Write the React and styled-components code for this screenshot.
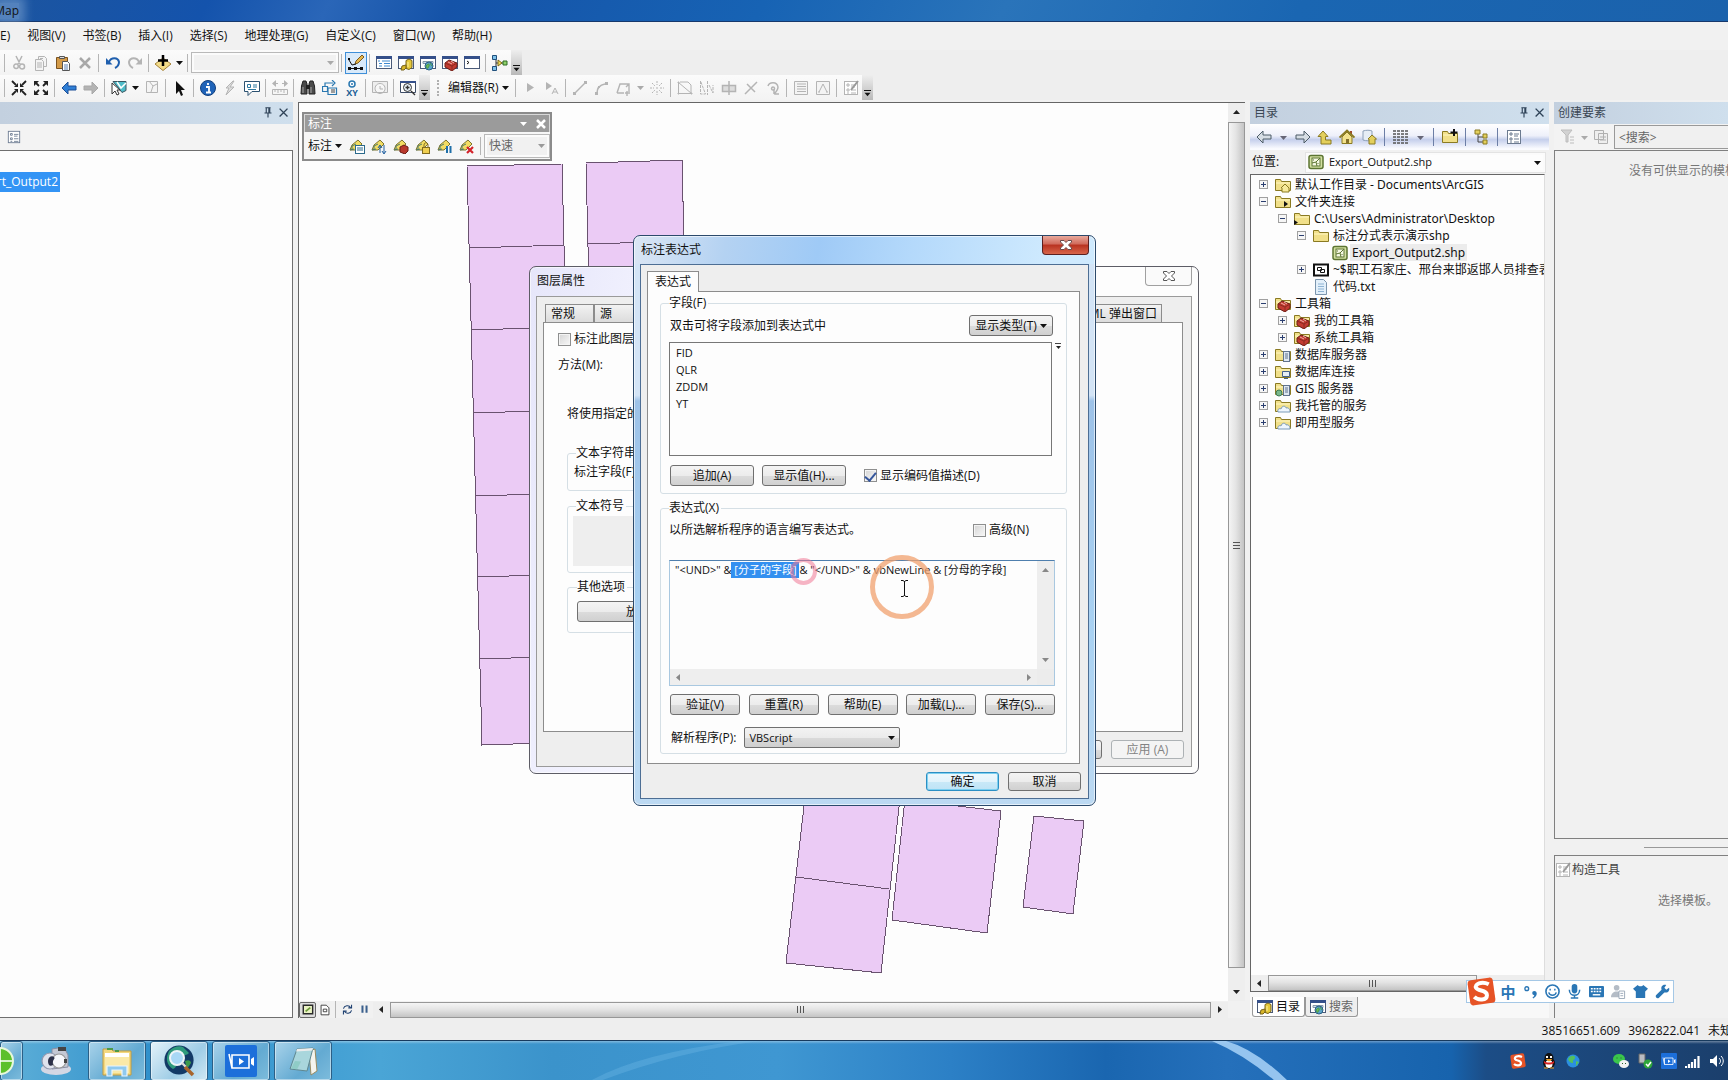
import React, { useEffect, useRef } from 'react'
import styled, { createGlobalStyle, css } from 'styled-components'

const GlobalStyle = createGlobalStyle`
  * { box-sizing: border-box; }
  body {
    margin: 0;
    overflow: hidden;
    background: #eee;
  }
  body, button, input, select, textarea {
    font-family: "Open Sans", "Noto Sans CJK SC", sans-serif;
    font-size: 12px;
    line-height: 16px;
    color: #111;
  }
  button { padding: 0; }
  ul { margin: 0; padding: 0; list-style: none; }
`

/* ---------- icons ---------- */

const gray = '#b4b4b4'
const yellow = '#e3cf5c'
const olive = '#8a7a22'

const Win = ({ children }) => (
  <>
    <rect x="0.5" y="1.5" width="15" height="12" fill="#fff" stroke="#4a5a78" />
    <rect x="0" y="1" width="16" height="3" fill="#35508a" />
    {children}
  </>
)

const Folder = ({ children }) => (
  <>
    <path d="M.5 13.5v-11h5l1 2h9v9z" fill="#f1e08a" stroke={olive} />
    <path d="M1 6h14" stroke="#fff7c4" />
    {children}
  </>
)

const Tag = ({ children }) => (
  <>
    <path d="M1 12L3 7l6-5 4 4-6 6z" fill="#f2dc62" stroke="#7c7430" />
    <path d="M1 12l4-1M3 12V8l4-2" stroke="#4d7a6a" fill="none" />
    {children}
  </>
)

const Chest = () => (
  <>
    <path d="M3 8l4-3 8 3v4l-5 4-7-4z" fill="#c23a30" stroke="#6b1d16" />
    <path d="M3 8l7 3 5-3M10 11v5" stroke="#8c2a20" fill="none" />
    <path d="M6 7l4 2M9 6l3 2" stroke="#f0b0a8" fill="none" />
  </>
)

const Cylinder = () => (
  <>
    <path d="M8 5.5l3-1.5 3 1.5v7l-3 2-3-1z" fill="#e6c93a" stroke="#76621a" />
    <path d="M4 11l4-1v3l-2 2H3z" fill="#d8b628" stroke="#76621a" />
    <path d="M10 7v5" stroke="#fbf0a0" />
  </>
)

const Globe = ({ x = 9, y = 11 }) => (
  <>
    <circle cx={x} cy={y} r="4" fill="#5aa3c8" stroke="#2c5f85" />
    <path d={`M${x - 3} ${y}c2-3 4-2 3 0s-1 3-2 2zM${x + 1} ${y - 3}l2 3`} fill="#6dbb5d" stroke="#4d9a48" />
  </>
)

const House = () => (
  <>
    <path d="M11 2h2v4l-2-2z" fill="#a04a2c" />
    <path d="M3 8v6.5h10V8L8 3z" fill="#f3e28d" stroke={olive} />
    <path d="M.5 8.5L8 1.5l7.5 7" stroke={olive} strokeWidth="1.8" fill="none" />
    <path d="M7 10h3v4H7z" fill="#84702c" />
  </>
)

const Server = () => (
  <>
    <rect x="8.5" y="4.5" width="6" height="10" fill="#dfe8f2" stroke="#61738c" />
    <path d="M10 7h3M10 9h3M10 11h3" stroke="#61738c" />
  </>
)

const Cloud = () => <path d="M3 14c-1-3 2-4 3-3 1-4 5-3 5-1 3-1 4 2 4 4z" fill="#eef6fd" stroke="#7b9bb8" />

const Props = ({ color = '#6b7a90' }) => (
  <>
    <rect x="1.5" y="1.5" width="13" height="13" fill="#fff" stroke={color} />
    <path d="M4 4h2v2H4zM4 9h2v2H4zM8 5h5M8 10h5M4 13h2M8 13h5M8 7h4" stroke={color} fill="none" />
  </>
)

const Shp = () => (
  <>
    <rect x="1" y="1.5" width="14" height="13" rx="2" fill="#d3e0a2" stroke="#5c7432" strokeWidth="1.5" />
    <rect x="4" y="4" width="8" height="8" fill="#f6f9e4" stroke="#5c7432" />
    <path d="M4 9l4-1 4-4M8 8l1 4M5 6h1M10 9v1" stroke="#5c7432" fill="none" />
  </>
)

const glyphs = {
  cut: <path d="M5 1l4 8M11 1L7 9M5 9a2 2 0 1 0 .1 4.5A2 2 0 0 0 5 9zM11 9a2 2 0 1 0 .1 5A2 2 0 0 0 11 9z" stroke={gray} strokeWidth="1.5" fill="none" />,
  copy: <path d="M5.5 5V1.5h6l2 2v8H11M2.5 4.5h6l2 2v9h-8zM4 8h5M4 10h5M4 12h5M7 3.5h3" stroke={gray} fill="#f4f4f4" />,
  paste: (
    <>
      <path d="M1.5 2.5h11v11h-11z" fill="#d39a48" stroke="#7a5220" />
      <path d="M4.5 3.5V1.5h5v2z" fill="#ddd" stroke="#555" />
      <path d="M7.5 6.5h5l2 2v7h-7z" fill="#fff" stroke="#555" />
      <path d="M9 10h4M9 12h4M9 14h4" stroke="#5a7fb0" />
    </>
  ),
  del: <path d="M3 3l10 10M13 3L3 13" stroke="#a8a8a8" strokeWidth="2.5" />,
  undo: (
    <>
      <path d="M4 7c2-5 9-5 10 0 0 3-2 5-4 6" stroke="#1f5fae" strokeWidth="2" fill="none" />
      <path d="M1 3v6.5h6.5z" fill="#1f5fae" />
    </>
  ),
  redo: (
    <>
      <path d="M12 7C10 2 3 2 2 7c0 3 2 5 4 6" stroke={gray} strokeWidth="2" fill="none" />
      <path d="M15 3v6.5H8.5z" fill={gray} />
    </>
  ),
  addData: (
    <>
      <path d="M0 9l8-6 8 6-8 6.5z" fill="#f3dc88" stroke="#a4823a" />
      <path d="M8 0v11M3 5.5h10" stroke="#000" strokeWidth="2.5" />
    </>
  ),
  edit: (
    <>
      <path d="M7 9l1-3 6-6 2 2-6 6z" fill="#e8b84a" stroke="#7a5a20" />
      <path d="M1 5l3 5 4-1M2 13.5h12" stroke="#111" fill="none" />
      <path d="M0 12h3v3H0zM6 12h3v3H6zM12 12h3v3h-3zM0 3h2v2H0z" fill="#111" />
    </>
  ),
  table: <Win><path d="M2 6h2M6 6h8M3 8.5h3M8 8.5h6M3 11h3M8 11h6" stroke="#3f8ad0" /></Win>,
  catalogWin: <Win><Cylinder /></Win>,
  searchWin: <Win><path d="M3 6.5h10v2H3z" fill="#cfe0ee" stroke="#89a" /><Globe /></Win>,
  toolboxWin: <Win><Chest /></Win>,
  pyWin: <Win><path d="M3 6l2 1.5L3 9" stroke="#111" fill="none" /></Win>,
  model: (
    <>
      <path d="M4 3v10M4 8h10" stroke="#333" />
      <path d="M.5.5h4v4h-4zM.5 11.5h4v4h-4z" fill="#7fc2ea" stroke="#20507c" />
      <path d="M6 5l4 3-4 3z" fill="#f3dd57" stroke="#7a6a1a" />
      <path d="M11 6h4v4h-4z" fill="#8fd16a" stroke="#2f6a24" />
    </>
  ),
  shrink: (
    <>
      <path d="M1 1l4 4M15 1l-4 4M1 15l4-4M15 15l-4-4" stroke="#222" strokeWidth="1.8" />
      <path d="M7 3v4H3zM9 3v4h4zM7 13V9H3zM9 13V9h4z" fill="#222" />
    </>
  ),
  grow: (
    <>
      <path d="M3 3l3 3M13 3l-3 3M3 13l3-3M13 13l-3-3" stroke="#222" strokeWidth="1.8" />
      <path d="M1 1h5L1 6zM15 1h-5l5 5zM1 15h5l-5-5zM15 15h-5l5-5z" fill="#222" />
    </>
  ),
  back: <path d="M1 8l6-6v4h8v4H7v4z" fill="#2f7fd6" stroke="#1c4f96" />,
  fwd: <path d="M15 8L9 2v4H1v4h8v4z" fill={gray} stroke="#a8a8a8" />,
  selectFeat: (
    <>
      <path d="M2 1.5h13v9l-4 2-3-4z" fill="#4fbcc8" stroke="#3a5560" />
      <path d="M6 2l4 6 5-5" stroke="#fff" strokeWidth="1.5" fill="none" />
      <path d="M1 3v11l3-3 2 4 2-1-2-4h3z" fill="#fff" stroke="#333" />
    </>
  ),
  clearSel: <path d="M2.5 1.5h11v11h-11zM5 1l4 5 4-2M9 6l-2 6" stroke={gray} fill="#f4f4f4" />,
  pointer: <path d="M4 1v13l3-3 2 5 2-1-2-5h4z" fill="#111" />,
  info: (
    <>
      <circle cx="8" cy="8" r="7.5" fill="#1f63b8" stroke="#123f7c" />
      <path d="M6 7h3v5M6 12.5h5M8 3v2" stroke="#fff" strokeWidth="1.8" fill="none" />
    </>
  ),
  bolt: <path d="M11 1L4 8h3l-3 7 8-8H8l4-6z" fill="#ddd" stroke={gray} />,
  html: (
    <>
      <path d="M.5 1.5h15v10H8l-4 4v-4H.5z" fill="#fff" stroke="#2b5170" />
      <path d="M3.5 4.5h3v3h-3zM9 5h4M9 7h4M4 9.5h8" stroke="#2b78a0" fill="none" />
    </>
  ),
  measure: (
    <>
      <path d="M0 3.5L4 0v7zM16 3.5L12 0v7z" fill={gray} />
      <path d="M3 3.5h3M10 3.5h3M.5 9.5h15v5H.5zM3 10v2M6 10v3M9 10v2M12 10v3" stroke={gray} fill="none" />
    </>
  ),
  find: (
    <>
      <path d="M3 1h3l1 3v10H1l.5-8zM13 1h-3L9 4v10h6l-.5-8z" fill="#4a4a4a" stroke="#222" />
      <path d="M6 5h4v4H6z" fill="#222" />
      <path d="M3 7v6M11 7v6" stroke="#aaa" />
    </>
  ),
  route: (
    <>
      <path d="M.5 6.5h5v5h-5zM8 8h6.5v6.5H6V8zM3 6V3h8M10 0l3 3-3 3" stroke="#2b78b0" fill="none" strokeWidth="1.2" />
      <path d="M9 10h4M9 12h4" stroke="#444" />
    </>
  ),
  clock: <path d="M.5 1.5h15v11H.5zM8 3.5a5 5 0 1 0 .1 0zM8 6v3h3" stroke={gray} fill="#eee" />,
  zoomWin: (
    <>
      <path d="M.5 1.5h15v11H.5z" fill="#fff" stroke="#3d4c66" />
      <path d="M0 1h16v2H0z" fill="#35508a" />
      <circle cx="7.5" cy="7.5" r="4" fill="#e8f2fa" stroke="#333" />
      <path d="M11 11l4 4M5.5 7.5h4M7.5 5.5v4" stroke="#333" strokeWidth="1.4" />
    </>
  ),
  eArrow: <path d="M5 3v9l7-4.5z" fill={gray} />,
  eArrowA: <><path d="M2 2v8l6-4z" fill={gray} /><path d="M8 14l3-6 3 6M9 12h4" stroke={gray} fill="none" /></>,
  line: <><path d="M3 13L13 3" stroke={gray} strokeWidth="1.5" /><path d="M1 12h3v3H1zM12 1h3v3h-3z" fill={gray} /></>,
  arc: <><path d="M3 13c0-5 3-8 8-9" stroke={gray} strokeWidth="1.5" fill="none" /><path d="M1 12h3v3H1zM11 2h3v3h-3zM4 6h2v2H4z" fill={gray} /></>,
  trace: <path d="M1 13L4 4h9v8M1 13h7M11 11v5M9 13h5M13 4l-3 3" stroke={gray} strokeWidth="1.4" fill="none" />,
  burst: <path d="M8 1v4M8 11v4M1 8h4M11 8h4M3 3l3 3M13 3l-3 3M3 13l3-3M13 13l-3-3M7 8h2" stroke={gray} strokeDasharray="2 1" />,
  reshape: <path d="M1.5 2.5v11h13zM3 2h8l3 3v8M1 2h1v1H1zM1 13h1v1H1zM14 13h1v1h-1z" stroke={gray} fill="none" />,
  mirror: <path d="M1.5 1v13h5zM8.5 1v14M10 5l4 8v-8" stroke={gray} fill="none" strokeDasharray="3 1" />,
  split: <path d="M1.5 5.5h13v6h-13zM8 1v14" stroke={gray} fill="#ddd" strokeWidth="1.5" />,
  cross: <path d="M2 14L14 2M4 4l8 8" stroke={gray} strokeWidth="1.5" />,
  rotate: <path d="M3 6c1-4 9-5 10 1 0 3-2 5-4 7M9 14V9M9 14h5M8 7a1.5 1.5 0 1 0 .1 0" stroke={gray} strokeWidth="1.5" fill="none" />,
  attrs: <path d="M1.5 1.5h13v13h-13zM4 4h9M4 6.5h9M4 9h9M4 11.5h9" stroke={gray} fill="#f4f4f4" />,
  sketch: <path d="M1.5 1.5h13v13h-13zM4 12l4-8 4 8M3 12h2M11 12h2" stroke={gray} fill="#f4f4f4" />,
  template: <><Props color={gray} /><path d="M8 10l7-9" stroke="#9a9a9a" strokeWidth="2" /></>,
  tagTable: <Tag><rect x="6.5" y="7.5" width="9" height="8" fill="#fff" stroke="#2b6a8c" /><path d="M8 10h6M8 12h6" stroke="#2b6a8c" /></Tag>,
  tagSort: <Tag><path d="M9 15V8M7 10l2-3 2 3M13 7v8M11 13l2 3 2-3" stroke="#1f5fa0" fill="none" /></Tag>,
  tagMap: <Tag><path d="M7 9l4-2 4 2v4l-3 3-5-2z" fill="#b8382c" stroke="#6b1d16" /></Tag>,
  tagLock: <Tag><path d="M9 9V7c0-3 4-3 4 0v2" stroke="#806a20" fill="none" /><rect x="7.5" y="9.5" width="7" height="6" fill="#f0cf50" stroke="#806a20" /></Tag>,
  tagPause: <Tag><path d="M10 8v7M13.5 8v7" stroke="#1f6fa8" strokeWidth="2" /></Tag>,
  tagDel: <Tag><path d="M8 9l6 6M14 9l-6 6" stroke="#d3232a" strokeWidth="2.2" /></Tag>,
  props: <Props />,
  cBack: <path d="M1 8l6-6v4h8v4H7v4z" fill="#d6dde4" stroke="#4d5c68" />,
  cFwd: <path d="M15 8L9 2v4H1v4h8v4z" fill="#d6dde4" stroke="#4d5c68" />,
  up: <path d="M6 2l5 5.5H8.5V11H14v4H4V7.5H1z" fill={yellow} stroke={olive} />,
  house: <House />,
  homeDb: <><path d="M2 2c3-1 7-1 9 0v9c-2 1-6 1-9 0z" fill="#e6edf5" stroke="#8da0b8" /><path d="M7 10l4-4 4.5 4H14v5H8v-5z" fill={yellow} stroke={olive} /></>,
  grid: <path d="M0 2h16M0 5h16M0 8h16M0 11h16M0 14h16" stroke="#555" strokeWidth="1.5" strokeDasharray="3 1" />,
  folderAdd: <Folder><path d="M12 0v7M8.5 3.5h7" stroke="#111" strokeWidth="2" /></Folder>,
  tree: <><path d="M4 4v9h6M4 8h6" stroke="#444" fill="none" /><path d="M1 1h5v4H1zM9 5h4v4H9zM9 11h4v4H9z" fill={yellow} stroke={olive} /></>,
  filter: <path d="M1 1h11L8 6v7H6V6zM10 8h4M10 11h4M10 14h4" fill="#d2d2d2" stroke="#bdbdbd" />,
  sheets: <path d="M1.5 1.5h9v9h-9zM5.5 4.5h9v10h-9zM7 8h6M7 11h6" fill="#eee" stroke="#b0b0b0" />,
  folder: <Folder />,
  folderHome: <Folder><path d="M6 11l4-4 4 4v4H7v-4" fill="#f7ea9c" stroke={olive} /></Folder>,
  folderLink: <Folder><path d="M9 7l4 3-4 3z" fill="#111" /></Folder>,
  folderOpen: <Folder><path d="M0 9l4 2.5L0 14z" fill="#111" /></Folder>,
  folderTool: <Folder><Chest /></Folder>,
  folderServer: <Folder><Server /></Folder>,
  folderDb: <Folder><path d="M7.5 7.5h7v5h-7zM9 14.5h4" fill="#e6eef6" stroke="#44618c" /></Folder>,
  folderGis: <Folder><Server /><circle cx="4" cy="12" r="3" fill="#79b88c" stroke="#3f7a52" /></Folder>,
  folderCloud: <Folder><Cloud /></Folder>,
  shp: <Shp />,
  xls: (
    <>
      <path d="M1 2.5h14v11H1z" fill="#fff" stroke="#111" strokeWidth="2" />
      <path d="M4.5 5.5h4v3h-4zM7.5 7.5h4v3h-4z" fill="#fff" stroke="#111" />
    </>
  ),
  txt: <><path d="M2.5.5h8l3 3v12h-11z" fill="#e3f0fa" stroke="#7b95ad" /><path d="M5 5h6M5 7.5h6M5 10h6M5 12.5h6" stroke="#8fb4d4" /></>,
  pin: <path d="M5 2h6M6 2v6M10 2v6M9 2v6M4 8h8M8 8v5" stroke="#2f4358" strokeWidth="1.3" />,
  close: <path d="M3 3l9 9M12 3l-9 9" stroke="#2f4358" strokeWidth="1.6" />,
  dataView: <><path d="M3.5 3.5h10v9h-10z" fill="#eaf3c4" stroke="#2a2a2a" strokeWidth="1.5" /><path d="M6 10l5-4" stroke="#6c9a3a" strokeWidth="2" /></>,
  layoutView: <path d="M3.5 2.5h6l3 3v8h-9zM6 7h4v3H6z" fill="#fff" stroke="#333" />,
  refresh: <path d="M3 7c1-4 7-5 9-1M13 2v4H9M13 9c-1 4-7 5-9 1M3 14v-4h4" stroke="#1d3f70" strokeWidth="1.3" fill="none" />,
  pause: <path d="M5.5 3v9M10.5 3v9" stroke="#3a5f8c" strokeWidth="2.5" />,
  // input method bar
  punct: <><circle cx="4" cy="5" r="2" fill="none" stroke="#2a76b5" strokeWidth="1.5" /><path d="M12 7.5a2.2 2.2 0 1 0 0 4.4c0 1-1 2-2 2.6l1 1c5-3 4.5-8 1-8z" fill="#2a76b5" /></>,
  smile: <><circle cx="8" cy="8" r="7" fill="none" stroke="#2a76b5" strokeWidth="1.7" /><path d="M5.5 5v2M10.5 5v2M4 9c1 4 7 4 8 0" stroke="#2a76b5" strokeWidth="1.5" fill="none" /></>,
  mic: <><rect x="5" y="0" width="6" height="10" rx="3" fill="#2a76b5" /><path d="M2.5 6c0 8 11 8 11 0M8 12v3M4 15h8" stroke="#2a76b5" strokeWidth="1.6" fill="none" /></>,
  keyboard: <><rect y="2" width="16" height="12" rx="1" fill="#2a76b5" /><path d="M2 5h12M2 8h12" stroke="#fff" strokeWidth="1.5" strokeDasharray="2 1" /><path d="M4 11.5h8" stroke="#fff" strokeWidth="1.5" /></>,
  person: <><circle cx="6" cy="4" r="3" fill="#b4bcc6" /><path d="M0 14c0-8 12-8 12 0z" fill="#b4bcc6" /><path d="M8.5 7.5h6v8h-6zM10 10h3M10 12.5h3" fill="#fff" stroke="#9aa8b8" /></>,
  shirt: <path d="M5 1c1 2 5 2 6 0l5 4-3 3v7H3V8L0 5z" fill="#2a76b5" />,
  wrench: <path d="M15 4l-3 2-2-2 2-3c-4-1-6 2-5 5l-6 6c-1 2 1 4 3 3l6-6c4 1 6-2 5-5z" fill="#2a76b5" />,
  // notification area
  sogou: <><rect x="1" y="1" width="14" height="14" rx="2" fill="#e65326" transform="rotate(-8 8 8)" /><path d="M12 4C8 2 4 4 5 6s6 1 6 4-5 3-7 1" stroke="#fff" strokeWidth="2.2" fill="none" /></>,
  qq: (
    <>
      <ellipse cx="8" cy="10" rx="6" ry="5.5" fill="#111" />
      <ellipse cx="8" cy="5" rx="4.5" ry="5" fill="#111" />
      <ellipse cx="8" cy="11" rx="3.5" ry="4" fill="#fff" />
      <path d="M3 8c3 2 7 2 10 0v2c-3 2-7 2-10 0z" fill="#d62222" />
      <path d="M6 3v2M10 3v2" stroke="#fff" strokeWidth="2" />
      <path d="M5.5 6.5h5L8 8zM3 15h4M9 15h4" stroke="#f0a020" fill="#f0a020" />
    </>
  ),
  earth: <><circle cx="8" cy="8" r="6.5" fill="#2b8fe0" /><path d="M3 6c2-4 6-4 7-2s-3 3-2 5-4 1-5-3zM11 8l3 1-3 4z" fill="#54c05c" /></>,
  wechat: <><ellipse cx="6" cy="6" rx="6" ry="5" fill="#3ac64b" /><ellipse cx="11" cy="11" rx="5" ry="4" fill="#f2f2f2" /><path d="M4 4.5v1M8 4.5v1M9.5 10v1M12.5 10v1" stroke="#275c2c" /></>,
  usb: <><path d="M2 1h6v9H2z" fill="#b8bcc2" stroke="#666" /><circle cx="11" cy="11" r="4.5" fill="#2ea53b" /><path d="M9 11l2 2 3-4" stroke="#fff" strokeWidth="1.5" fill="none" /></>,
  video: (
    <>
      <rect width="16" height="16" rx="1" fill="#1c6fda" />
      <path d="M2 4.5l1.5 7M3.5 5h8.5v6.5H3.5z" stroke="#fff" strokeWidth=".8" fill="none" />
      <path d="M7 6.5v3.5l2.5-1.7zM13 7l1.5-1v4.5L13 9.5z" fill="#fff" />
    </>
  ),
  signal: <path d="M1 15v-2M4 15v-4M7 15V9M10 15V6M13.5 15V3" stroke="#fff" strokeWidth="2.2" />,
  sound: <><path d="M1 6h3l4-4v12l-4-4H1z" fill="#fff" /><path d="M10 5c2 2 2 4 0 6M12 3c3 3 3 7 0 10" stroke="#fff" fill="none" /></>,
  // pinned programs
  round: <><circle cx="2" cy="8" r="6.5" fill="#5cc02c" stroke="#e8f8da" /><path d="M-3 8h11M2 2v12" stroke="#fff" strokeWidth=".8" /></>,
  camera: (
    <>
      <ellipse cx="8" cy="12" rx="7.5" ry="3" fill="#d4d7e4" />
      <path d="M6 2l6-1 2 4v6l-8 1z" fill="#c4c8d4" stroke="#8a8fa4" strokeWidth=".5" />
      <circle cx="5" cy="8" r="4" fill="#dfe2ec" stroke="#9298ae" strokeWidth=".6" />
      <circle cx="9.5" cy="8" r="3.5" fill="#f6f7fb" stroke="#999" strokeWidth=".6" />
      <path d="M4 8c0-2 2-3 3-2s-1 1-.5 4C5 11 4 10 4 8z" fill="#2c3048" />
      <path d="M9 1h4v2H9zM12 7h1.5v2H12z" fill="#444" />
    </>
  ),
  explorer: (
    <>
      <path d="M1 2h4l1 1h9v12H1z" fill="#f3d880" stroke="#c09c40" strokeWidth=".5" />
      <path d="M2 4h12v2H2z" fill="#fff" />
      <path d="M3 2h3M7 3h2" stroke="#4d9a48" />
      <path d="M2 6h12v8H2z" fill="#fae9a8" />
      <path d="M3 15.5v-5h10v5h-2.5v-3h-5v3z" fill="#8fc9ee" stroke="#e8f6ff" strokeWidth=".6" />
    </>
  ),
  arcmap: (
    <>
      <circle cx="8" cy="7.5" r="7.3" fill="#133a66" />
      <path d="M3 3c2-2 5-3 7-2l3 3c-2 2-3 0-5 2s0 5-3 6c-3-2-4-5-2-9z" fill="#2f9a7c" />
      <path d="M11 8c2-1 3 0 3 1l-2 3z" fill="#3c9a4c" />
      <circle cx="7" cy="6.5" r="3.5" fill="#a9d8f6" stroke="#eef4f8" strokeWidth="1" />
      <path d="M9.5 9l2 2" stroke="#ddd" strokeWidth="1.2" />
      <path d="M11 11l4 4" stroke="#a8652c" strokeWidth="1.8" />
    </>
  ),
  notepad: (
    <>
      <path d="M11 3l3-1 1 11-3 2z" fill="#f4f4ee" stroke="#998b60" strokeWidth=".5" />
      <path d="M5 2l8-.5-3 11.5-8.5-1z" fill="#a9d6dc" stroke="#5f8790" strokeWidth=".5" />
      <path d="M5 2l8-.5-.3 1.2-8.2.5z" fill="#ececec" />
      <path d="M4 8l3 .3-2 4-3-.5z" fill="#7fc4b8" opacity=".6" />
    </>
  ),
}

const Svg = styled.svg`
  display: block;
  flex: none;
`

const Icon = ({ name, size = 16 }) => (
  <Svg width={size} height={size} viewBox="0 0 16 16" fill="none" aria-hidden="true">
    {glyphs[name]}
  </Svg>
)

const turns = { down: 0, left: 90, up: 180, right: 270 }

const Caret = ({ dir = 'down', color = '#111' }) => (
  <Svg width="7" height="7" viewBox="0 0 7 7" aria-hidden="true">
    <path d="M0 2h7L3.5 6z" fill={color} transform={`rotate(${turns[dir]} 3.5 3.5)`} />
  </Svg>
)

/* ---------- shell ---------- */

const Screen = styled.div`
  position: relative;
  display: flex;
  flex-direction: column;
  height: 100vh;
  overflow: hidden;
`

const TitleBar = styled.header`
  display: flex;
  align-items: center;
  height: 22px;
  border-bottom: 1px solid #16386c;
  background: linear-gradient(115deg, #1c55a0 0, #1453ac 12%, #2a66b8 19%, #1553a8 26%, #1763b4 44%, #2a74ba 58%, #1a66b2 75%, #1b62ac);
`

// the caption runs off the left edge of the screen
const Caption = styled.h1`
  display: flex;
  justify-content: flex-end;
  width: 19px;
  margin: 0;
  overflow: hidden;
  font-size: 12px;
  font-weight: 400;
  background: rgba(190, 215, 240, 0.35);
  box-shadow: 0 0 10px 6px rgba(190, 215, 240, 0.35);
`

const MenuBar = styled.nav`
  display: flex;
  gap: 17px;
  padding: 5px 0;
  background: #f1f1f1;

  button {
    border: 0;
    background: none;
    line-height: 18px;
    white-space: nowrap;
  }
`

const Bars = styled.div`
  display: flex;
`

const Bar = styled.div`
  display: flex;
  align-items: center;
  height: 25px;
  padding-left: 2px;
  background: linear-gradient(#fbfbfb, #f3f3f3);
`

const Sep = styled.span`
  width: 1px;
  height: 18px;
  margin: 0 3px 0 2px;
  background: #b5b5b5;
`

const Tool = styled.button`
  display: flex;
  align-items: center;
  justify-content: center;
  flex: none;
  width: 22px;
  height: 22px;
  border: 1px solid ${p => (p.$active ? '#3f8fd8' : 'transparent')};
  background: ${p => (p.$active ? '#d9eafa' : 'none')};
`

const CaretButton = styled.button`
  display: flex;
  align-items: center;
  justify-content: center;
  width: ${p => (p.$wide ? '17px' : '11px')};
  height: 22px;
  border: 0;
  background: none;
`

const TextTool = styled.button`
  display: flex;
  align-items: center;
  gap: 3px;
  padding: 0 4px;
  border: 0;
  background: none;
  white-space: nowrap;
`

const BarEnd = styled.button`
  display: flex;
  align-items: flex-end;
  justify-content: center;
  width: 11px;
  height: 25px;
  padding-bottom: 3px;
  border: 0;
  background: linear-gradient(#eee, #b9b9b9);

  svg { border-top: 1px solid #111; }
`

const Grip = styled.span`
  width: 3px;
  height: 16px;
  margin: 0 4px 0 5px;
  border-left: 2px dotted #b0b0b0;
`

const ComboBox = styled.span`
  display: grid;
  align-items: center;
  width: ${p => p.$width};
  min-width: 0;
  height: ${p => p.$height || '21px'};

  > * { grid-area: 1 / 1; }
  > svg {
    justify-self: end;
    margin-right: 5px;
    pointer-events: none;
  }
  select {
    appearance: none;
    width: 100%;
    height: 100%;
    padding: 0 18px 0 4px;
    border: 1px solid #b9b9b9;
    background: #f1f1f1;
    box-shadow: inset 0 0 0 2px #fbfbfb;
    color: #666;
    opacity: 1;
    ${p => p.$raised && css`
      border: 1px solid #707070;
      border-radius: 2px;
      background: linear-gradient(#f3f3f3, #ebebeb 50%, #dadada 51%, #cfcfcf);
      box-shadow: none;
      color: #111;
      font-size: 11px;
    `}
    ${p => p.$flat && css`
      padding-left: 23px;
      border-color: #e3e3e3;
      background: #fdfdfd;
      color: #111;
      font-size: 11px;
    `}
  }
`

const Workspace = styled.main`
  display: flex;
  gap: 5px;
  flex: 1;
  min-height: 0;
  padding-top: 2px;
  background: #f1f1f1;
`

const Dock = styled.section`
  display: flex;
  flex-direction: column;
  flex: none;
  width: ${p => p.$width};
  min-width: 0;
  overflow: hidden;
`

const DockTitle = styled.div`
  display: flex;
  align-items: center;
  height: 22px;
  padding: 0 0 0 4px;
  background: linear-gradient(90deg, #c3d0df, #cfdfed);
  color: #3a4654;

  h2 {
    flex: 1;
    margin: 0;
    font-size: 12px;
    font-weight: 400;
  }
  button {
    display: flex;
    width: 16px;
    border: 0;
    background: none;
  }
`

const DockBar = styled.div`
  display: flex;
  align-items: center;
  height: 26px;
  padding-left: 3px;
  background: ${p => (p.$blue ? 'linear-gradient(#fff, #eef0fa 45%, #c5cfec 60%, #fafbff 95%)' : '#f3f3f3')};

  ${Sep} {
    margin: 0 5px 0 4px;
    background: #6c7ea6;
  }
`

const LayerList = styled.div`
  flex: 1;
  padding-top: 21px;
  border: 1px solid #6f6f6f;
  border-left: 0;
  background: #fdfdfd;
`

const LayerName = styled.button`
  display: flex;
  justify-content: flex-end;
  width: 60px;
  height: 20px;
  padding: 2px;
  overflow: hidden;
  border: 0;
  background: #3394f5;
  color: #fff;
`

/* ---------- map ---------- */

const MapFrame = styled.section`
  display: grid;
  grid-template: minmax(0, 1fr) 17px / minmax(0, 1fr) 17px;
  flex: 1;
  min-width: 0;
  border-top: 1px solid #666;
  border-left: 1px solid #666;
`

const MapCanvas = styled.svg`
  display: block;
  width: 100%;
  height: 100%;
  background: #fdfdfd;

  path {
    fill: #ebcbf5;
    stroke: #69526f;
  }
`

const MapFooter = styled.div`
  display: flex;
  align-items: center;
  min-width: 0;
`

const ViewButton = styled.button`
  display: flex;
  align-items: center;
  justify-content: center;
  width: 17px;
  height: 16px;
  border: 1px solid ${p => (p.$active ? '#666' : 'transparent')};
  border-radius: 2px;
  background: ${p => (p.$active ? '#ddd' : 'none')};
`

const ScrollTrack = styled.div`
  display: flex;
  flex-direction: ${p => (p.$vertical ? 'column' : 'row')};
  align-items: stretch;
  flex: 1;
  min-width: 0;
  min-height: 0;
  height: ${p => (p.$vertical ? 'auto' : '16px')};
  background: #eee;

  button {
    display: flex;
    align-items: center;
    justify-content: center;
    flex: none;
    width: ${p => (p.$vertical ? 'auto' : '17px')};
    height: ${p => (p.$vertical ? '19px' : 'auto')};
    border: 0;
    background: none;
  }
`

const Thumb = styled.div`
  display: flex;
  align-items: center;
  justify-content: center;
  flex: ${p => p.$grow || 1};
  border: 1px solid #979797;
  background: linear-gradient(${p => (p.$vertical ? '90deg' : '180deg')}, #f4f4f4, #e4e4e4 45%, #c4c4c4);
`

const Spare = styled.div`
  flex: ${p => p.$grow || 1};
`

const Ribs = styled.span`
  display: flex;
  gap: 2px;
  flex-direction: ${p => (p.$vertical ? 'column' : 'row')};

  i {
    width: ${p => (p.$vertical ? '7px' : '1px')};
    height: ${p => (p.$vertical ? '1px' : '7px')};
    background: #555;
  }
`

const Scrollbar = ({ vertical, grow, spare, plain }) => (
  <ScrollTrack $vertical={vertical}>
    <button aria-label={vertical ? 'up' : 'left'}>
      <Caret dir={vertical ? 'up' : 'left'} color={plain ? '#888' : '#222'} />
    </button>
    {plain ? <Spare /> : (
      <Thumb $vertical={vertical} $grow={grow}>
        <Ribs $vertical={vertical}><i /><i /><i /></Ribs>
      </Thumb>
    )}
    {spare && <Spare $grow={spare} />}
    <button aria-label={vertical ? 'down' : 'right'}>
      <Caret dir={vertical ? 'down' : 'right'} color={plain ? '#888' : '#222'} />
    </button>
  </ScrollTrack>
)

/* ---------- catalog ---------- */

const Location = styled.label`
  display: flex;
  align-items: center;
  height: 24px;
  padding-left: 2px;
  padding-right: 3px;

  > span:first-child { width: 53px; }
`

const LocationBox = styled.span`
  display: grid;
  align-items: center;
  flex: 1;

  > * { grid-area: 1 / 1; }
  > svg { margin-left: 3px; }
`

const TreeBox = styled.div`
  display: flex;
  flex-direction: column;
  flex: 1;
  min-height: 0;
  margin-right: 4px;
  border: 1px solid #666;
  border-right-color: #ddd;
  background: #fdfdfd;
`

const Tree = styled.ul`
  flex: 1;
  padding-top: 1px;
  overflow: hidden;
`

const Node = styled.li`
  display: flex;
  align-items: center;
  height: 17px;
  padding-left: ${p => 8 + p.$level * 19}px;
  font-family: "Noto Sans", "Noto Sans CJK SC", sans-serif;
  white-space: nowrap;

  span {
    margin-left: 2px;
    padding: 0 2px;
    line-height: 17px;
    background: ${p => (p.$selected ? '#ececec' : 'none')};
  }
`

const Expander = styled.button`
  display: flex;
  align-items: center;
  justify-content: center;
  width: 9px;
  height: 9px;
  margin-right: 7px;
  border: 1px solid #a0a0a0;
  background: #f6f6f6;
  visibility: ${p => (p.$hidden ? 'hidden' : 'visible')};
`

const TabStrip = styled.div`
  display: flex;
  height: 26px;
  padding: 5px 0 1px 2px;
  background: #f8f8f8;
`

const DockTab = styled.button`
  display: flex;
  align-items: center;
  gap: 3px;
  padding: 0 4px;
  border: 1px solid #999;
  border-top: 0;
  border-radius: 0 0 3px 3px;
  background: ${p => (p.$active ? '#fff' : '#eee')};
  color: ${p => (p.$active ? '#111' : '#666')};
`

const nodes = [
  [0, '+', 'folderHome', '默认工作目录 - Documents\\ArcGIS'],
  [0, '-', 'folderLink', '文件夹连接'],
  [1, '-', 'folderOpen', 'C:\\Users\\Administrator\\Desktop'],
  [2, '-', 'folder', '标注分式表示演示shp'],
  [3, '', 'shp', 'Export_Output2.shp'],
  [2, '+', 'xls', '~$职工石家庄、邢台来邯返邯人员排查表'],
  [2, '', 'txt', '代码.txt'],
  [0, '-', 'folderTool', '工具箱'],
  [1, '+', 'folderTool', '我的工具箱'],
  [1, '+', 'folderTool', '系统工具箱'],
  [0, '+', 'folderServer', '数据库服务器'],
  [0, '+', 'folderDb', '数据库连接'],
  [0, '+', 'folderGis', 'GIS 服务器'],
  [0, '+', 'folderCloud', '我托管的服务'],
  [0, '+', 'folderCloud', '即用型服务'],
]

/* ---------- create features ---------- */

const SearchInput = styled.input`
  flex: 1;
  min-width: 0;
  height: 24px;
  margin-left: 2px;
  padding: 0 4px;
  border: 1px solid #999;
  border-right: 0;
  background: #f0f0f0;
  &::placeholder { color: #666; opacity: 1; }
`

const TemplateBox = styled.div`
  flex: 1;
  padding: 12px 0 0 74px;
  overflow: hidden;
  border: 1px solid #808080;
  border-right: 0;
  color: #777;
  white-space: nowrap;
`

const Splitter = styled.div`
  height: 16px;
  padding-top: 8px;

  &::after {
    content: '';
    display: block;
    height: 1px;
    margin-left: 90px;
    background: #999;
  }
`

const ToolsBox = styled.div`
  height: 163px;
  padding-top: 6px;
  border: 1px solid #808080;
  border-width: 1px 0 0 1px;

  h3 {
    display: flex;
    align-items: center;
    gap: 1px;
    margin: 0;
    font-size: 12px;
    font-weight: 400;
    color: #444;
  }
  p {
    margin: 15px 10px 0;
    text-align: right;
    color: #777;
  }
`

/* ---------- windows ---------- */

const activeGlass = `
  linear-gradient(100deg, #dbe6f4 0, #b4d2f2 20%, #9fcaf6 40%, #b4d9fb 60%, #cfeafe 90%) top / 100% 28px no-repeat,
  linear-gradient(#d3e4f6 28%, #9dc2e8 29%, #a9d2f3 70%, #bcd9f2)
`

const Window = styled.section`
  position: absolute;
  isolation: isolate;
  left: ${p => p.$x}px;
  top: ${p => p.$y}px;
  width: ${p => p.$w}px;
  padding: 0 6px 6px;
  border: 1px solid ${p => (p.$active ? '#2c4a6c' : '#5d5d66')};
  border-radius: 7px;
  background: ${p => (p.$active ? activeGlass : 'linear-gradient(100deg, #e6e6fa, #f4f4ff 20%, #fdfdfd 50%)')};
  box-shadow: inset 0 0 0 1px rgba(255, 255, 255, 0.6);
`

const WindowTitle = styled.div`
  display: flex;
  align-items: flex-start;
  justify-content: space-between;
  height: ${p => p.$height};

  h2 {
    margin: 0;
    padding: 6px 0 0 1px;
    font-size: 12px;
    font-weight: 400;
  }
`

const CloseButton = styled.button`
  display: flex;
  align-items: center;
  justify-content: center;
  width: 47px;
  height: 19px;
  border: 1px solid ${p => (p.$active ? '#5b2020' : '#a0a0a0')};
  border-top: 0;
  border-radius: 0 0 4px 4px;
  background: ${p => (p.$active ? 'linear-gradient(#e9a99c, #d0695a 45%, #b83220 50%, #d8654a)' : '#fafafa')};
`

const Client = styled.div`
  padding: ${p => p.$top} 7px 7px 6px;
  border: 1px solid ${p => (p.$active ? '#4d6e94' : '#9a9a9a')};
  background: #eee;
`

const TabRow = styled.div`
  display: flex;
  padding: ${p => p.$pad || 0};
`

const Tab = styled.button`
  height: ${p => (p.$active ? '21px' : '18px')};
  margin-bottom: ${p => (p.$active ? '-1px' : 0)};
  padding: 0 ${p => p.$end || '7px'} 0 ${p => (p.$active ? '7px' : '5px')};
  border: 1px solid #8c8c8c;
  border-bottom: 0;
  background: ${p => (p.$active ? '#fdfdfd' : 'linear-gradient(#f2f2f2, #dcdcdc)')};
  z-index: 1;
`

const Filler = styled.span`
  flex: 1;
`

const Panel = styled.div`
  margin-right: 1px;
  padding: ${p => p.$pad};
  border: 1px solid #8c8c8c;
  background: #fdfdfd;
`

const Group = styled.fieldset`
  min-width: 0;
  margin: ${p => p.$margin || 0};
  padding: ${p => p.$pad};
  border: 1px solid #d5dfe5;
  border-radius: 3px;

  legend {
    margin-left: ${p => p.$indent || 0};
    padding: 0 2px 0 0;
    line-height: 16px;
  }
`

const Row = styled.div`
  display: flex;
  align-items: center;
  justify-content: ${p => (p.$spread ? 'space-between' : p.$end ? 'flex-end' : 'flex-start')};
  gap: ${p => p.$gap || 0};
  min-height: 16px;
  margin: ${p => p.$margin || 0};
  white-space: nowrap;
`

const PushButton = styled.button`
  display: flex;
  align-items: center;
  justify-content: center;
  gap: 3px;
  width: ${p => p.$w || '70px'};
  height: ${p => p.$h || '21px'};
  border: 1px solid ${p => (p.$primary ? '#2c8fc4' : '#707070')};
  border-radius: 3px;
  background: linear-gradient(#f4f4f4, #ececec 50%, #dcdcdc 51%, #d0d0d0);
  white-space: nowrap;
  ${p => p.$primary && css`
    background: linear-gradient(#eef8fd, #e2f3fb 50%, #c9e9f8 51%, #bfe3f5);
    box-shadow: inset 0 0 0 1px #7ed0f0;
  `}
  &:disabled {
    border-color: #adb2b5;
    background: #f4f4f4;
    color: #838383;
  }
`

const Check = styled.label`
  display: flex;
  align-items: center;
  gap: 3px;

  input {
    appearance: none;
    display: flex;
    justify-content: center;
    width: 13px;
    height: 13px;
    margin: 0;
    border: 1px solid #8e8f8f;
    background: linear-gradient(135deg, #d5d5d5, #f8f8f8);
    box-shadow: inset 0 0 0 1px #f4f4f4;
  }
  input:checked::after {
    content: '';
    width: 5px;
    height: 9px;
    border: solid #35569c;
    border-width: 0 2px 2px 0;
    transform: rotate(40deg);
  }
`

const FieldList = styled.ul`
  height: 114px;
  padding: 1px 6px;
  border: 1px solid #777;
  background: #fdfdfd;

  li {
    font-size: 11px;
    line-height: 17px;
  }
`

const FieldRow = styled.div`
  display: grid;
  grid-template-columns: 1fr 13px;
  margin: 6px 0 9px;
`

const Editor = styled.div`
  display: grid;
  grid-template: 108px 16px / 1fr 17px;
  margin: 22px 0 8px;
  border: 1px solid #a9c8e0;
  border-top-color: #4f7fae;
  background: #ececec;

  textarea {
    width: 100%;
    height: 100%;
    padding: 1px 5px;
    overflow: hidden;
    resize: none;
    border: 0;
    outline: 0;
    background: #fdfdfd;
    font-size: 11px;
    white-space: pre;
  }
  textarea::selection {
    background: #3390f0;
    color: #fff;
  }
`

const Swatch = styled.div`
  height: 50px;
  background: #eee;
`

// mouse marks float above every window
const ClickRing = styled.span`
  position: absolute;
  left: ${p => p.$x}px;
  top: ${p => p.$y}px;
  width: ${p => p.$size}px;
  height: ${p => p.$size}px;
  border: ${p => p.$line}px solid ${p => p.$color};
  border-radius: 50%;
  pointer-events: none;
`

const IBeam = styled.svg`
  position: absolute;
  left: 900px;
  top: 580px;
`

const FloatBar = styled.section`
  position: absolute;
  left: 302px;
  top: 112px;
  width: 250px;
  border: 2px solid #8b8b8b;
  background: #f6f6f6;
`

const FloatTitle = styled.div`
  display: flex;
  align-items: center;
  gap: 9px;
  height: 18px;
  padding: 0 3px;
  border: 1px solid #d8d8d8;
  border-bottom: 0;
  background: #9b9b9b;
  color: #fff;

  span { flex: 1; }
`

const FloatTools = styled.div`
  display: flex;
  align-items: center;
  height: 27px;
`

/* ---------- status bar, taskbar ---------- */

const Status = styled.footer`
  display: flex;
  justify-content: flex-end;
  align-items: center;
  height: 22px;
  padding-top: 3px;
  background: #eee;
  white-space: nowrap;

  span { margin-right: 8px; }
  b {
    width: 20px;
    overflow: hidden;
    font-weight: 400;
  }
`

const Taskbar = styled.div`
  position: relative;
  display: flex;
  gap: 4px;
  height: 40px;
  border-top: 1px solid #173a5e;
  overflow: hidden;
  background:
    linear-gradient(rgba(255, 255, 255, 0.35), transparent 3px),
    linear-gradient(90deg, #5fb0d8 0, #2e8fcb 9%, #4aa5d6 22%, #3b93cb 32%, #3f97d2 45%, #2c80c6 55%, #1a66b0 64%, #2570bb 71%, #1763ad 84%, #1c4d86 86%, #1b3f6c 100%);
`

const Beam = styled.svg`
  position: absolute;
  left: 0;
  top: 0;
  width: 100%;
  height: 100%;
  pointer-events: none;
`

const Task = styled.button`
  display: flex;
  align-items: center;
  justify-content: center;
  width: ${p => p.$w || '58px'};
  height: 40px;
  border: 1px solid ${p => (p.$plain ? 'transparent' : '#2b5f86')};
  border-radius: 3px;
  background: ${p => (p.$plain ? 'none' : p.$active
    ? 'linear-gradient(135deg, #e4f2fa, #9fcde6 60%, #cfe8f4)'
    : 'linear-gradient(135deg, #a9d3ea, #63aad2 60%, #7dbcdc)')};
  box-shadow: ${p => (p.$plain ? 'none' : 'inset 0 0 0 1px rgba(255, 255, 255, 0.45)')};
  z-index: 1;
`

const Tray = styled.div`
  display: flex;
  align-items: center;
  gap: 8px;
  margin-left: auto;
  padding-right: 3px;
  z-index: 1;

  button {
    display: flex;
    border: 0;
    background: none;
  }
  button:nth-child(2) { margin-left: 7px; }
  button:nth-child(4) { margin-left: 24px; }
`

const ImeBar = styled.div`
  position: absolute;
  right: 54px;
  bottom: 77px;
  display: flex;
  align-items: center;
  gap: 6px;
  height: 23px;
  padding: 0 3px 0 33px;
  border: 1px solid #a5c8e6;
  background: #fff;

  > svg {
    position: absolute;
    left: 0;
    top: -4px;
  }
  button {
    display: flex;
    justify-content: center;
    width: 16px;
    border: 0;
    background: none;
    color: #2a76b5;
    font-size: 15px;
    font-weight: 700;
  }
`

/* ---------- parts ---------- */

const Tools = ({ names }) => names.map((name, i) => (
  name === '|' ? <Sep key={i} /> : <Tool key={i} aria-label={name}><Icon name={name} /></Tool>
))

const menus = ['E)', '视图(V)', '书签(B)', '插入(I)', '选择(S)', '地理处理(G)', '自定义(C)', '窗口(W)', '帮助(H)']

const End = () => <BarEnd aria-label="more"><Caret /></BarEnd>

const XY = () => (
  <Svg width="16" height="16" viewBox="0 0 16 16">
    <circle cx="8" cy="4" r="3" fill="#fff" stroke="#2b78b0" strokeWidth="1.5" />
    <circle cx="8" cy="4" r="1" fill="#2b78b0" />
    <text x="8" y="16" textAnchor="middle" fontSize="9" fontWeight="700" fill="#1b5f96">XY</text>
  </Svg>
)

const Toolbars = () => (
  <>
    <Bars>
      <Bar>
        <Tools names={['|', 'cut', 'copy', 'paste', 'del', '|', 'undo', 'redo', '|', 'addData']} />
        <CaretButton aria-label="add"><Caret /></CaretButton>
        <Sep />
        <ComboBox $width="148px">
          <select disabled aria-label="scale"><option /></select>
          <Caret color="#aaa" />
        </ComboBox>
        <Sep />
        <Tool $active aria-label="editor"><Icon name="edit" /></Tool>
        <Tools names={['|', 'table', 'catalogWin', 'searchWin', 'toolboxWin', 'pyWin', '|', 'model']} />
        <End />
      </Bar>
    </Bars>
    <Bars>
      <Bar>
        <Tools names={['|', 'shrink', 'grow', '|', 'back', 'fwd', '|', 'selectFeat']} />
        <CaretButton aria-label="select"><Caret /></CaretButton>
        <Tools names={['clearSel', '|', 'pointer', '|', 'info', 'bolt', 'html', '|', 'measure', '|', 'find', 'route']} />
        <Tool aria-label="go to xy"><XY /></Tool>
        <Tools names={['|', 'clock', '|', 'zoomWin']} />
        <End />
      </Bar>
      <Bar>
        <Grip />
        <TextTool>编辑器(R)<Caret /></TextTool>
        <Tools names={['|', 'eArrow', 'eArrowA', '|', 'line', 'arc', 'trace']} />
        <CaretButton aria-label="construct"><Caret color="#aaa" /></CaretButton>
        <Tools names={['burst', '|', 'reshape', 'mirror', 'split', 'cross', 'rotate', '|', 'attrs', 'sketch', '|', 'template']} />
        <End />
      </Bar>
    </Bars>
  </>
)

const DockButtons = () => (
  <>
    <button aria-label="pin"><Icon name="pin" size={14} /></button>
    <button aria-label="close"><Icon name="close" size={14} /></button>
  </>
)

// parcels in page units, shifted back to the canvas origin
const parcels = [
  'M467 166L562 164L566 327L575 742L482 745Z',
  'M470 248L564 245M472 330L566 327M474 413L568 410M476 496L570 493M478 577L572 574M480 659L574 656',
  'M586 163L682 160L684 242L686 330L590 330Z',
  'M588 244L684 241',
  'M807 780L902 780L899 807L881 973L786 963Z',
  'M796 877L889 889',
  'M907 780L914 801L1001 811L987 933L892 920Z',
  'M1034 816L1084 821L1073 914L1023 907Z',
]

const MapView = () => (
  <MapFrame>
    <MapCanvas shapeRendering="crispEdges" aria-label="map">
      <g transform="translate(-299 -103)">
        {parcels.map(d => <path key={d} d={d} />)}
      </g>
    </MapCanvas>
    <Scrollbar vertical grow={845} spare={14} />
    <MapFooter>
      <ViewButton $active aria-label="data view"><Icon name="dataView" size={15} /></ViewButton>
      <ViewButton aria-label="layout view"><Icon name="layoutView" size={14} /></ViewButton>
      <Sep />
      <ViewButton aria-label="refresh"><Icon name="refresh" size={13} /></ViewButton>
      <ViewButton aria-label="pause"><Icon name="pause" size={13} /></ViewButton>
      <Scrollbar />
    </MapFooter>
  </MapFrame>
)

const Catalog = () => (
  <Dock $width="299px">
    <DockTitle><h2>目录</h2><DockButtons /></DockTitle>
    <DockBar $blue>
      <Tool aria-label="back"><Icon name="cBack" /></Tool>
      <CaretButton $wide aria-label="history"><Caret color="#667" /></CaretButton>
      <Tools names={['cFwd', 'up', 'house', 'homeDb', '|', 'grid']} />
      <CaretButton $wide aria-label="view"><Caret color="#667" /></CaretButton>
      <Tools names={['|', 'folderAdd', '|', 'tree', '|', 'props']} />
    </DockBar>
    <Location>
      <span>位置:</span>
      <LocationBox>
        <ComboBox $flat $width="100%" $height="21px">
          <select><option>Export_Output2.shp</option></select>
          <Caret />
        </ComboBox>
        <Icon name="shp" />
      </LocationBox>
    </Location>
    <TreeBox>
      <Tree>
        {nodes.map(([level, sign, icon, text]) => (
          <Node key={text} $level={level} $selected={icon === 'shp'}>
            <Expander $hidden={!sign} aria-label="expand">
              <Svg width="7" height="7" stroke="#2b3f70">
                <path d={sign === '+' ? 'M1 3.5h5M3.5 1v5' : 'M1 3.5h5'} />
              </Svg>
            </Expander>
            <Icon name={icon} />
            <span>{text}</span>
          </Node>
        ))}
      </Tree>
      <Row><Scrollbar grow={208} spare={50} /></Row>
    </TreeBox>
    <TabStrip>
      <DockTab $active><Icon name="catalogWin" />目录</DockTab>
      <DockTab><Icon name="searchWin" />搜索</DockTab>
    </TabStrip>
  </Dock>
)

const CreateFeatures = () => (
  <Dock $width="174px">
    <DockTitle><h2>创建要素</h2></DockTitle>
    <DockBar>
      <Tool aria-label="filter"><Icon name="filter" /></Tool>
      <CaretButton aria-label="filter by"><Caret color="#aaa" /></CaretButton>
      <Tool aria-label="organize"><Icon name="sheets" /></Tool>
      <SearchInput placeholder="<搜索>" aria-label="搜索" />
    </DockBar>
    <TemplateBox>没有可供显示的模板。</TemplateBox>
    <Splitter />
    <ToolsBox>
      <h3><Icon name="template" />构造工具</h3>
      <p>选择模板。</p>
    </ToolsBox>
  </Dock>
)

const LabelToolbar = () => (
  <FloatBar>
    <FloatTitle>
      <span>标注</span>
      <Caret color="#fff" />
      <Svg width="10" height="10"><path d="M1 1l8 8M9 1l-8 8" stroke="#fff" strokeWidth="2.5" /></Svg>
    </FloatTitle>
    <FloatTools>
      <TextTool>标注<Caret /></TextTool>
      <Tools names={['tagTable', 'tagSort', 'tagMap', 'tagLock', 'tagPause', 'tagDel', '|']} />
      <ComboBox $width="66px" $height="24px">
        <select disabled aria-label="quality"><option>快速</option></select>
        <Caret color="#999" />
      </ComboBox>
    </FloatTools>
  </FloatBar>
)

const CloseMark = ({ color, stroke }) => (
  <Svg width="14" height="12" viewBox="0 0 14 12">
    <path d="M1.5 1.5h3.5l2 2 2-2h3.5v1.5L9.5 6l3 3v1.5H9l-2-2-2 2H1.5V9l3-3-3-3z" fill={color} stroke={stroke} />
  </Svg>
)

const LayerProperties = () => (
  <Window $x={529} $y={266} $w={670}>
    <WindowTitle $height="29px">
      <h2>图层属性</h2>
      <CloseButton aria-label="关闭"><CloseMark color="#fff" stroke="#555" /></CloseButton>
    </WindowTitle>
    <Client $top="7px">
      <TabRow $pad="0 22px 0 2px">
        <Tab $end="18px">常规</Tab>
        <Tab $end="40px">源</Tab>
        <Filler />
        <Tab $end="4px">HTML 弹出窗口</Tab>
      </TabRow>
      <Panel $pad="8px 100px 98px 14px">
        <Check><input type="checkbox" />标注此图层中的要素(L)</Check>
        <Row $margin="10px 0 33px">方法(M):</Row>
        <Row $margin="0 0 23px 9px">将使用指定的选项标注所有要素。</Row>
        <Group $margin="0 9px 7px" $indent="2px" $pad="3px 6px 10px">
          <legend>文本字符串</legend>
          <Row>标注字段(F):</Row>
        </Group>
        <Group $margin="0 9px 6px" $indent="3px" $pad="2px 5px 6px">
          <legend>文本符号</legend>
          <Swatch />
        </Group>
        <Group $margin="0 9px" $pad="6px 9px 10px">
          <legend>其他选项</legend>
          <PushButton $w="170px">放置属性(P)...</PushButton>
        </Group>
      </Panel>
      <Row $end $gap="9px" $margin="8px 0 0">
        <PushButton $w="73px" $h="19px">取消</PushButton>
        <PushButton $w="73px" $h="19px" disabled>应用 (A)</PushButton>
      </Row>
    </Client>
  </Window>
)

const expression = '"<UND>" & [分子的字段] & "</UND>" & vbNewLine & [分母的字段]'
const selection = ' [分子的字段] '

const ExpressionDialog = () => {
  const editor = useRef(null)

  useEffect(() => {
    const start = expression.indexOf(selection)
    editor.current.focus()
    editor.current.setSelectionRange(start, start + selection.length)
  }, [])

  return (
    <Window $active $x={633} $y={235} $w={463}>
      <WindowTitle $height="28px">
        <h2>标注表达式</h2>
        <CloseButton $active aria-label="关闭"><CloseMark color="#fff" stroke="#6a4a4a" /></CloseButton>
      </WindowTitle>
      <Client $active $top="6px">
        <TabRow><Tab $active>表达式</Tab></TabRow>
        <Panel $pad="3px 12px 9px">
          <Group $pad="4px 1px 7px 8px" $margin="0 0 6px">
            <legend>字段(F)</legend>
            <Row $spread $margin="0 12px 0 1px">
              双击可将字段添加到表达式中
              <PushButton $w="84px">显示类型(T)<Caret /></PushButton>
            </Row>
            <FieldRow>
              <FieldList>
                <li>FID</li>
                <li>QLR</li>
                <li>ZDDM</li>
                <li>YT</li>
              </FieldList>
              <Svg width="12" height="10"><path d="M3 1.5h6" stroke="#444" /><path d="M4 4h5L6.5 7z" fill="#222" /></Svg>
            </FieldRow>
            <Row $gap="8px" $margin="0 0 0 1px">
              <PushButton $w="84px">追加(A)</PushButton>
              <PushButton $w="84px">显示值(H)...</PushButton>
              <Row $margin="0 0 0 10px"><Check><input type="checkbox" defaultChecked />显示编码值描述(D)</Check></Row>
            </Row>
          </Group>
          <Group $pad="6px 11px 5px 8px">
            <legend>表达式(X)</legend>
            <Row $spread>
              以所选解析程序的语言编写表达式。
              <Row $margin="0 26px 0 0"><Check><input type="checkbox" />高级(N)</Check></Row>
            </Row>
            <Editor>
              <textarea ref={editor} defaultValue={expression} spellCheck="false" aria-label="表达式" />
              <Scrollbar vertical plain />
              <Scrollbar plain />
            </Editor>
            <Row $spread $margin="0 0 0 1px">
              <PushButton>验证(V)</PushButton>
              <PushButton>重置(R)</PushButton>
              <PushButton>帮助(E)</PushButton>
              <PushButton>加载(L)...</PushButton>
              <PushButton>保存(S)...</PushButton>
            </Row>
            <Row as="label" $gap="8px" $margin="12px 0 0 2px">
              解析程序(P):
              <ComboBox $raised $width="156px">
                <select><option>VBScript</option></select>
                <Caret />
              </ComboBox>
            </Row>
          </Group>
        </Panel>
        <Row $end $gap="9px" $margin="8px 0 0">
          <PushButton $primary $w="73px" $h="19px">确定</PushButton>
          <PushButton $w="73px" $h="19px">取消</PushButton>
        </Row>
      </Client>
    </Window>
  )
}

const App = () => (
  <>
    <GlobalStyle />
    <Screen>
      <TitleBar><Caption>Map</Caption></TitleBar>
      <MenuBar>{menus.map(m => <button key={m}>{m}</button>)}</MenuBar>
      <Toolbars />
      <Workspace>
        <Dock $width="293px">
          <DockTitle><h2 /><DockButtons /></DockTitle>
          <DockBar><Tool aria-label="options"><Icon name="props" size={14} /></Tool></DockBar>
          <LayerList><LayerName>rt_Output2</LayerName></LayerList>
        </Dock>
        <MapView />
        <Catalog />
        <CreateFeatures />
      </Workspace>
      <Status>
        <span>38516651.609</span>
        <span>3962822.041</span>
        <b>未知单位</b>
      </Status>
      <Taskbar>
        <Beam aria-hidden="true">
          <path d="M1212 0Q1245 14 1275 40L1288 40Q1255 8 1226 0Z" fill="#a9d4f8" opacity="0.85" />
          <path d="M600 40Q680 10 760 0L740 0Q640 12 590 40Z" fill="#7cc0ea" opacity="0.3" />
        </Beam>
        <Task $w="23px"><Icon name="round" size={32} /></Task>
        <Task $plain $w="57px"><Icon name="camera" size={32} /></Task>
        <Task><Icon name="explorer" size={32} /></Task>
        <Task $active><Icon name="arcmap" size={32} /></Task>
        <Task><Icon name="video" size={32} /></Task>
        <Task><Icon name="notepad" size={32} /></Task>
        <Tray>
          {['sogou', 'qq', 'earth', 'wechat', 'usb', 'video', 'signal', 'sound'].map(n => (
            <button key={n} aria-label={n}><Icon name={n} /></button>
          ))}
        </Tray>
      </Taskbar>
      <LabelToolbar />
      <LayerProperties />
      <ExpressionDialog />
      <ClickRing $x={790} $y={558} $size={27} $line={4} $color="rgba(240, 120, 150, 0.55)" />
      <ClickRing $x={870} $y={555} $size={64} $line={5} $color="rgba(240, 160, 110, 0.75)" />
      <IBeam width="9" height="17" aria-hidden="true">
        <path d="M1 .5h2l1.5 1 1.5-1h2M4.5 1v15M1 16.5h2l1.5-1 1.5 1h2" stroke="#111" fill="none" />
      </IBeam>
      <ImeBar>
        <Icon name="sogou" size={29} />
        <button>中</button>
        {['punct', 'smile', 'mic', 'keyboard', 'person', 'shirt', 'wrench'].map(n => (
          <button key={n} aria-label={n}><Icon name={n} size={15} /></button>
        ))}
      </ImeBar>
    </Screen>
  </>
)

export default App
